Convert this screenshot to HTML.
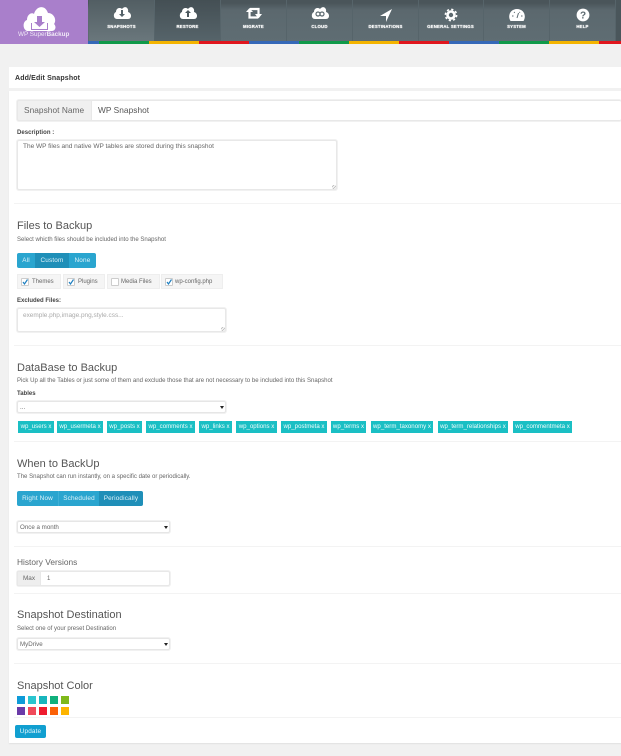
<!DOCTYPE html>
<html><head><meta charset="utf-8"><style>
*{box-sizing:border-box}
html,body{margin:0;padding:0}
body{width:621px;height:756px;position:relative;overflow:hidden;background:#f1f1f1;font-family:"Liberation Sans",sans-serif;color:#555}
.a,.t{position:absolute;white-space:nowrap}
.t{line-height:1}
h2{position:absolute;margin:0;font-weight:400;font-size:11px;line-height:1;color:#555;white-space:nowrap}
.s{font-size:6.05px;color:#666}
.b{font-size:6px;font-weight:700;color:#444}
.hr{position:absolute;left:14px;width:607px;height:1px;background:#f3f3f3}
.nav{position:absolute;top:0;height:41px;width:66px;border-right:1px solid #56646a;text-align:center}
.nav svg{position:absolute;left:23px;top:4px;width:20px;height:18px;fill:#fff}
.nav span{position:absolute;left:0;width:100%;top:24px;font-size:4.3px;font-weight:700;color:#fff;line-height:5px;letter-spacing:.2px;white-space:nowrap;text-shadow:0 0 1px #fff}
.box{position:absolute;background:#fff;border:1px solid #e8e8e8;border-radius:2px;box-shadow:0 0 0 1px #f1f1f1}
.st{position:absolute;top:41px;height:3px}
.btn{position:absolute;background:#2aa5cf;color:#dff3fa;font-size:6.4px;text-align:center;line-height:15px;height:15px;letter-spacing:.15px}
.ck{position:absolute;top:274px;height:15px;background:#f5f5f5;border:1px solid #eee;font-size:6px;line-height:14px;color:#666;padding-left:14px}
.ck i{position:absolute;left:3px;top:3px;width:8px;height:8px;background:#fff;border:1px solid #ccc;border-radius:1px}
.ck svg{position:absolute;left:3px;top:3px;width:8px;height:8px}
.tag{position:absolute;top:421px;height:12px;background:#1abfc4;color:#eefcfc;font-size:6.1px;line-height:12px;text-align:center}
.sel{position:absolute;height:12px;background:#fff;border:1px solid #e6e6e6;border-radius:2px;box-shadow:0 0 0 1px #f1f1f1;font-size:6.2px;line-height:11px;color:#666;padding-left:2px}
.sel:after{content:"";position:absolute;right:1px;top:4px;border:2px solid transparent;border-top:3px solid #222;border-bottom:0}
.c{position:absolute;width:8px;height:8px}
.grip{position:absolute;width:4px;height:4px;background:repeating-linear-gradient(135deg,transparent 0,transparent 1px,#c4c4c4 1px,#c4c4c4 2px)}
</style></head><body>
<div class="a" style="left:0;top:0;width:88px;height:44px;background:#a97fcb"></div>
<svg class="a" style="left:23px;top:5px;width:33px;height:27px" viewBox="0 0 33 27"><path fill="#fff" d="M4 26C-1 24 0 16 4 15 4 9 9 7 11 9 13 1 22-1 25 8 31 8 34 15 31 19 34 22 32 26 29 26Z"/><path fill="#a97fcb" d="M8 18h1v6h15v-6h1v7H8ZM14 11h5v6h3l-5.500 5-5.500-5h3Z"/></svg>
<div class="t" style="left:18px;top:32px;font-size:6.3px;color:#f1e9f7">WP Super<b>Backup</b></div>
<div class="a" style="left:88px;top:0;width:533px;height:41px;background:linear-gradient(#4a555a 0,#4a555a 3px,#5b686e 10px,#5f6d73 100%)"></div>
<div class="a" style="left:155px;top:0;width:66px;height:41px;background:linear-gradient(#444f54,#56646a)"></div>
<div class="a" style="left:89px;top:0;width:66px;height:41px;background:linear-gradient(#525e63,#6a777c)"></div>
<div class="a" style="left:616px;top:0;width:5px;height:41px;background:#4a565b"></div>
<div class="nav" style="left:89px"><svg viewBox="0 0 20 18"><path d="M5 15C1 15 1 9 4 8 4 4 8 3 10 5 13 1 17 4 16 8 20 9 20 15 16 15Z"/><path fill="#55636a" d="M9 6h2v4h2l-3 3-3-3h2Z"/></svg><span>SNAPSHOTS</span></div>
<div class="nav" style="left:155px"><svg viewBox="0 0 20 18"><path d="M5 15C1 15 1 9 4 8 4 4 8 3 10 5 13 1 17 4 16 8 20 9 20 15 16 15Z"/><path fill="#4c585e" d="M9 13h2V9h2l-3-3-3 3h2Z"/></svg><span>RESTORE</span></div>
<div class="nav" style="left:221px"><svg viewBox="0 0 20 18"><path fill="none" stroke="#fff" stroke-width="2.200" d="M5.500 7V13.500H14M14.500 11V5H6"/><path d="M2 8h7L5.500 4ZM11 10h7l-3.500 4.500Z"/></svg><span>MIGRATE</span></div>
<div class="nav" style="left:287px"><svg viewBox="0 0 20 18"><path d="M5 15C1 15 1 9 4 8 4 4 8 3 10 5 13 1 17 4 16 8 20 9 20 15 16 15Z"/><circle cx="8" cy="10" r="2" fill="none" stroke="#5d6b71" stroke-width="1.200"/><circle cx="12" cy="10" r="2" fill="none" stroke="#5d6b71" stroke-width="1.200"/></svg><span>CLOUD</span></div>
<div class="nav" style="left:353px"><svg viewBox="0 0 20 18"><path d="M16 5L4 12h6v6Z"/></svg><span>DESTINATIONS</span></div>
<div class="nav" style="left:418px"><svg viewBox="0 0 20 18"><circle cx="10" cy="11" r="3.500" fill="none" stroke="#fff" stroke-width="2.600"/><circle cx="10" cy="11" r="5.600" fill="none" stroke="#fff" stroke-width="1.600" stroke-dasharray="2.200 2.200"/></svg><span>GENERAL SETTINGS</span></div>
<div class="nav" style="left:484px"><svg viewBox="0 0 20 18"><path d="M3.500 17C0 11 4 5 10 5s10 6 6.500 12Z"/><path fill="none" stroke="#5d6b71" stroke-width="1" d="M10 14l1.500-5M5 12h1.500M7 8l.8.8M14 12h1.500M13 8l-.6.6"/></svg><span>SYSTEM</span></div>
<div class="nav" style="left:550px"><svg viewBox="0 0 20 18"><circle cx="10" cy="11" r="6.400"/><text x="10" y="14.500" font-family="Liberation Sans" font-weight="700" font-size="10" text-anchor="middle" fill="#5d6b71">?</text></svg><span>HELP</span></div>
<div class="st" style="left:88px;width:11px;background:#3568b8"></div>
<div class="st" style="left:99px;width:50px;background:#109a4a"></div>
<div class="st" style="left:149px;width:50px;background:#f4b400"></div>
<div class="st" style="left:199px;width:50px;background:#e0161e"></div>
<div class="st" style="left:249px;width:50px;background:#3568b8"></div>
<div class="st" style="left:299px;width:50px;background:#109a4a"></div>
<div class="st" style="left:349px;width:50px;background:#f4b400"></div>
<div class="st" style="left:399px;width:50px;background:#e0161e"></div>
<div class="st" style="left:449px;width:50px;background:#3568b8"></div>
<div class="st" style="left:499px;width:50px;background:#109a4a"></div>
<div class="st" style="left:549px;width:50px;background:#f4b400"></div>
<div class="st" style="left:599px;width:22px;background:#e0161e"></div>

<div class="a" style="left:9px;top:67px;width:612px;height:21px;background:#fff"></div>
<div class="t" style="left:15px;top:75px;font-size:7px;font-weight:700;color:#333;letter-spacing:.15px">Add/Edit Snapshot</div>
<div class="a" style="left:9px;top:91px;width:612px;height:652px;background:#fff;box-shadow:0 1px 1px #e2e2e2"></div>

<div class="box" style="left:17px;top:100px;width:604px;height:21px;border-right:0"></div>
<div class="a" style="left:17px;top:100px;width:75px;height:21px;background:#f0f0f0;border:1px solid #e8e8e8;border-radius:2px 0 0 2px"></div>
<div class="t" style="left:24px;top:106px;font-size:8.3px;color:#666;letter-spacing:.05px">Snapshot Name</div>
<div class="t" style="left:98px;top:106px;font-size:8.3px;color:#555;letter-spacing:.05px">WP Snapshot</div>
<div class="t b" style="left:17px;top:130px;letter-spacing:.05px">Description :</div>
<div class="box" style="left:17px;top:140px;width:320px;height:50px"></div>
<div class="grip" style="left:332px;top:185px"></div>
<div class="t" style="left:23px;top:144px;font-size:6.5px;color:#666">The WP files and native WP tables are stored during this snapshot</div>
<div class="hr" style="top:203px"></div>

<h2 style="left:17px;top:221px">Files to Backup</h2>
<div class="t s" style="left:17px;top:237px">Select whicth files should be included into the Snapshot</div>
<div class="btn" style="left:17px;top:253px;width:18px;border-radius:2px 0 0 2px">All</div>
<div class="btn" style="left:35px;top:253px;width:34px;background:#1f8fb8">Custom</div>
<div class="btn" style="left:69px;top:253px;width:27px;border-radius:0 2px 2px 0">None</div>
<div class="ck" style="left:17px;width:44px"><i></i><svg viewBox="0 0 8 8"><path d="M2 4l1.500 2L6.500 1.500" fill="none" stroke="#1e7fc0" stroke-width="1.200"/></svg>Themes</div>
<div class="ck" style="left:63px;width:42px"><i></i><svg viewBox="0 0 8 8"><path d="M2 4l1.500 2L6.500 1.500" fill="none" stroke="#1e7fc0" stroke-width="1.200"/></svg>Plugins</div>
<div class="ck" style="left:107px;width:53px;padding-left:13px"><i></i>Media Files</div>
<div class="ck" style="left:161px;width:62px;padding-left:13px"><i></i><svg viewBox="0 0 8 8"><path d="M2 4l1.500 2L6.500 1.500" fill="none" stroke="#1e7fc0" stroke-width="1.200"/></svg>wp-config.php</div>
<div class="t b" style="left:17px;top:298px">Excluded Files:</div>
<div class="box" style="left:17px;top:308px;width:209px;height:24px"></div>
<div class="grip" style="left:221px;top:327px"></div>
<div class="t" style="left:23px;top:313px;font-size:6.45px;color:#aaa">exemple.php,image.png,style.css...</div>
<div class="hr" style="top:345px"></div>

<h2 style="left:17px;top:363px">DataBase to Backup</h2>
<div class="t s" style="left:17px;top:378px">Pick Up all the Tables or just some of them and exclude those that are not necessary to be included into this Snapshot</div>
<div class="t b" style="left:17px;top:391px">Tables</div>
<div class="sel" style="left:17px;top:401px;width:209px">...</div>
<div class="tag" style="left:18px;width:36px">wp_users x</div>
<div class="tag" style="left:57px;width:46px">wp_usermeta x</div>
<div class="tag" style="left:107px;width:35px">wp_posts x</div>
<div class="tag" style="left:146px;width:49px">wp_comments x</div>
<div class="tag" style="left:199px;width:33px">wp_links x</div>
<div class="tag" style="left:236px;width:41px">wp_options x</div>
<div class="tag" style="left:281px;width:46px">wp_postmeta x</div>
<div class="tag" style="left:331px;width:35px">wp_terms x</div>
<div class="tag" style="left:371px;width:62px">wp_term_taxonomy x</div>
<div class="tag" style="left:438px;width:70px">wp_term_relationships x</div>
<div class="tag" style="left:513px;width:59px">wp_commentmeta x</div>
<div class="hr" style="top:441px"></div>

<h2 style="left:17px;top:459px">When to BackUp</h2>
<div class="t s" style="left:17px;top:474px">The Snapshot can run instantly, on a specific date or periodically.</div>
<div class="btn" style="left:17px;top:491px;width:41px;border-radius:2px 0 0 2px">Right Now</div>
<div class="btn" style="left:58px;top:491px;width:41px;border-left:1px solid #3fb0d6">Scheduled</div>
<div class="btn" style="left:99px;top:491px;width:44px;background:#1f8fb8;border-radius:0 2px 2px 0">Periodically</div>
<div class="sel" style="left:17px;top:521px;width:153px">Once a month</div>
<div class="hr" style="top:546px"></div>

<div class="t" style="left:17px;top:558px;font-size:8.35px;color:#666">History Versions</div>
<div class="box" style="left:17px;top:571px;width:153px;height:15px"></div>
<div class="a" style="left:17px;top:571px;width:24px;height:15px;background:#eee;border:1px solid #e8e8e8;font-size:6.4px;line-height:13px;text-align:center;color:#666">Max</div>
<div class="t s" style="left:47px;top:576px">1</div>
<div class="hr" style="top:593px"></div>

<h2 style="left:17px;top:610px">Snapshot Destination</h2>
<div class="t s" style="left:17px;top:626px">Select one of your preset Destination</div>
<div class="sel" style="left:17px;top:638px;width:153px">MyDrive</div>
<div class="hr" style="top:663px"></div>

<h2 style="left:17px;top:681px">Snapshot Color</h2>
<div class="c" style="left:17px;top:696px;background:#0e9bd8"></div>
<div class="c" style="left:28px;top:696px;background:#2bc5cf"></div>
<div class="c" style="left:39px;top:696px;background:#18b5bd"></div>
<div class="c" style="left:50px;top:696px;background:#10b07c"></div>
<div class="c" style="left:61px;top:696px;background:#7fb91a"></div>
<div class="c" style="left:17px;top:707px;background:#6a3aa8"></div>
<div class="c" style="left:28px;top:707px;background:#f04a5a"></div>
<div class="c" style="left:39px;top:707px;background:#ee1c2e"></div>
<div class="c" style="left:50px;top:707px;background:#fb6107"></div>
<div class="c" style="left:61px;top:707px;background:#fdb400"></div>
<div class="hr" style="top:717px"></div>
<div class="btn" style="left:15px;top:725px;width:31px;height:13px;line-height:13px;background:#119fd0;border-radius:2px;color:#e6f7fd">Update</div>
</body></html>
